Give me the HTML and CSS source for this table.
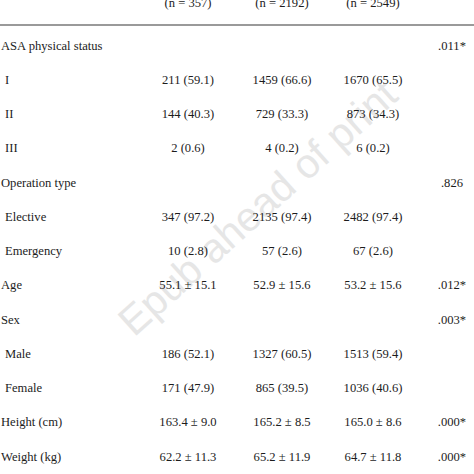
FILE: index.html
```html
<!DOCTYPE html>
<html>
<head>
<meta charset="utf-8">
<link rel="stylesheet" href="styles.css">
</head>
<body>
<div class="page">
  <div class="watermark">Epub ahead of print</div>
  <div class="tbl">
    <div class="row head">
      <div class="lab"></div>
      <div class="num">(n = 357)</div>
      <div class="num">(n = 2192)</div>
      <div class="num">(n = 2549)</div>
      <div class="p"></div>
    </div>
    <div class="rule"></div>
    <div class="body">
      <div class="row"><div class="lab">ASA physical status</div><div class="num"></div><div class="num"></div><div class="num"></div><div class="p">.011*</div></div>
      <div class="row"><div class="lab sub">I</div><div class="num">211 (59.1)</div><div class="num">1459 (66.6)</div><div class="num">1670 (65.5)</div><div class="p"></div></div>
      <div class="row"><div class="lab sub">II</div><div class="num">144 (40.3)</div><div class="num">729 (33.3)</div><div class="num">873 (34.3)</div><div class="p"></div></div>
      <div class="row"><div class="lab sub">III</div><div class="num">2 (0.6)</div><div class="num">4 (0.2)</div><div class="num">6 (0.2)</div><div class="p"></div></div>
      <div class="row"><div class="lab">Operation type</div><div class="num"></div><div class="num"></div><div class="num"></div><div class="p">.826</div></div>
      <div class="row"><div class="lab sub">Elective</div><div class="num">347 (97.2)</div><div class="num">2135 (97.4)</div><div class="num">2482 (97.4)</div><div class="p"></div></div>
      <div class="row"><div class="lab sub">Emergency</div><div class="num">10 (2.8)</div><div class="num">57 (2.6)</div><div class="num">67 (2.6)</div><div class="p"></div></div>
      <div class="row"><div class="lab">Age</div><div class="num">55.1 ± 15.1</div><div class="num">52.9 ± 15.6</div><div class="num">53.2 ± 15.6</div><div class="p">.012*</div></div>
      <div class="row"><div class="lab">Sex</div><div class="num"></div><div class="num"></div><div class="num"></div><div class="p">.003*</div></div>
      <div class="row"><div class="lab sub">Male</div><div class="num">186 (52.1)</div><div class="num">1327 (60.5)</div><div class="num">1513 (59.4)</div><div class="p"></div></div>
      <div class="row"><div class="lab sub">Female</div><div class="num">171 (47.9)</div><div class="num">865 (39.5)</div><div class="num">1036 (40.6)</div><div class="p"></div></div>
      <div class="row"><div class="lab">Height (cm)</div><div class="num">163.4 ± 9.0</div><div class="num">165.2 ± 8.5</div><div class="num">165.0 ± 8.6</div><div class="p">.000*</div></div>
      <div class="row"><div class="lab">Weight (kg)</div><div class="num">62.2 ± 11.3</div><div class="num">65.2 ± 11.9</div><div class="num">64.7 ± 11.8</div><div class="p">.000*</div></div>
    </div>
  </div>
</div>
</body>
</html>
```

FILE: styles.css
```css
html, body {
  margin: 0;
  padding: 0;
  background: #ffffff;
}
.page {
  position: relative;
  width: 474px;
  height: 474px;
  overflow: hidden;
  font-family: "Liberation Serif", "Times New Roman", serif;
  font-size: 12.6px;
  color: #1c1c1c;
}
.watermark {
  position: absolute;
  left: 258px;
  top: 208px;
  transform: translate(-50%, -50%) rotate(-42deg);
  font-family: "Liberation Sans", Arial, sans-serif;
  font-size: 41px;
  color: #e6e6e6;
  white-space: nowrap;
  z-index: 0;
}
.tbl {
  position: relative;
  z-index: 1;
}
.row {
  display: grid;
  grid-template-columns: 141px 94px 94px 88px 57px;
  align-items: center;
  height: 34.25px;
}
.head {
  height: 14px;
  margin-top: -4px;
  line-height: 14px;
}
.rule {
  margin-top: 14px;
  height: 2px;
  background: #9a9a9a;
}
.body {
  padding-top: 3px;
}
.lab {
  padding-left: 1px;
  white-space: nowrap;
}
.lab.sub {
  padding-left: 5px;
}
.num {
  text-align: center;
  white-space: nowrap;
}
.p {
  padding-left: 13px;
  text-align: center;
  white-space: nowrap;
}
```
